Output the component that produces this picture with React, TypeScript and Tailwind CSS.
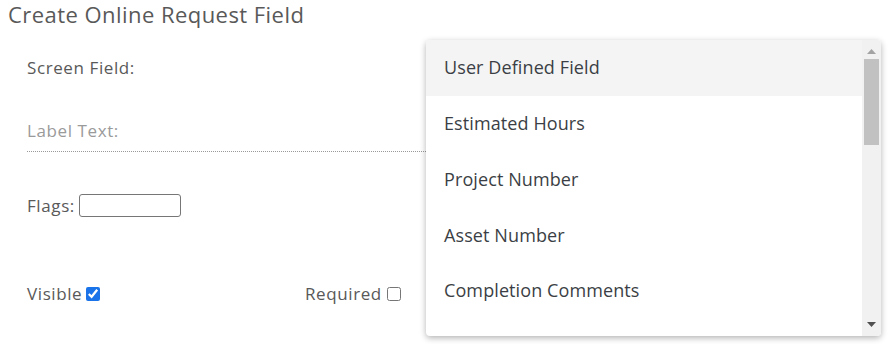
import React from 'react';

const options = [
  'User Defined Field',
  'Estimated Hours',
  'Project Number',
  'Asset Number',
  'Completion Comments',
];

export default function App() {
  return (
    <div
      className="relative h-[344px] w-[891px] overflow-hidden bg-white text-[#595959]"
      style={{ fontFamily: '"Open Sans", "Noto Sans", sans-serif' }}
    >
      <h1 className="h-[29px] pl-2 text-[22px] leading-[28px] tracking-[0.45px] text-[#595959]">
        Create Online Request Field
      </h1>

      <div className="pl-[27px] pr-[465px] text-[17px] tracking-[0.6px]">
        <div className="mt-[27px] flex h-[24px] items-center">Screen Field:</div>
        <div className="mt-[39px] flex h-[24px] items-center text-[#9a9a9a]">Label Text:</div>
        <div className="mt-[8px] border-b border-dotted border-[#999]" />

        <div className="mt-[42px] flex h-[23px] items-center gap-[4px]">
          <span>Flags:</span>
          <input
            type="text"
            className="h-[23px] w-[102px] rounded-[3px] border border-[#767676] bg-white"
          />
        </div>

        <div className="mt-[65px] flex h-[24px] items-center">
          <label className="flex w-[278px] items-center gap-[4px]">
            <span>Visible</span>
            <input type="checkbox" defaultChecked className="h-[14px] w-[14px] accent-[#1a73e8]" />
          </label>
          <label className="flex items-center gap-[5px]">
            <span>Required</span>
            <input type="checkbox" className="h-[14px] w-[14px]" />
          </label>
        </div>
      </div>

      {/* open select list */}
      <div className="absolute left-[426px] top-[40px] flex h-[296px] w-[455px] overflow-hidden rounded-[4px] bg-white shadow-[0_2px_6px_rgba(0,0,0,0.3)]">
        <ul className="flex-1">
          {options.map((o, i) => (
            <li
              key={o}
              className={`flex h-[55.75px] items-center pl-[18px] text-[18px] tracking-[0.1px] text-[#3b3f45] ${
                i === 0 ? 'bg-[#f4f4f4]' : ''
              }`}
            >
              {o}
            </li>
          ))}
        </ul>
        <div className="flex w-[19px] flex-col items-center bg-[#f1f1f1]">
          <svg width="9" height="5" viewBox="0 0 9 5" className="mt-[9px]">
            <path d="M0 5 L4.5 0 L9 5 Z" fill="#a3a3a3" />
          </svg>
          <div className="mt-[5px] h-[86px] w-[15px] bg-[#c1c1c1]" />
          <div className="flex-1" />
          <svg width="9" height="5" viewBox="0 0 9 5" className="mb-[9px]">
            <path d="M0 0 L9 0 L4.5 5 Z" fill="#505050" />
          </svg>
        </div>
      </div>
    </div>
  );
}
